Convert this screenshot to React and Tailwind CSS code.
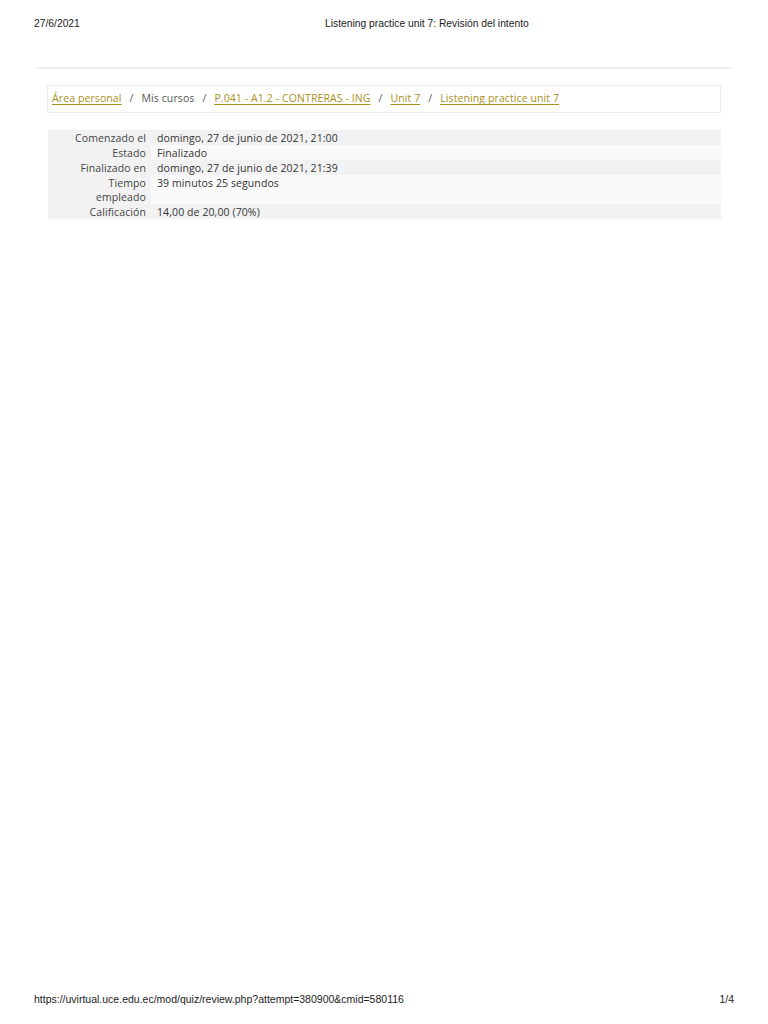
import React from 'react';

const rows = [
  { label: 'Comenzado el', value: 'domingo, 27 de junio de 2021, 21:00', bg: 'bg-[#f2f2f2]' },
  { label: 'Estado', value: 'Finalizado', bg: 'bg-[#f9f9f9]' },
  { label: 'Finalizado en', value: 'domingo, 27 de junio de 2021, 21:39', bg: 'bg-[#f2f2f2]' },
  { label: 'Tiempo empleado', value: '39 minutos 25 segundos', bg: 'bg-[#f9f9f9]' },
  { label: 'Calificación', value: '14,00 de 20,00 (70%)', bg: 'bg-[#f2f2f2]' },
];

const Crumb = ({ children }) => (
  <a href="#" className="text-[#a8911a] underline underline-offset-2">{children}</a>
);

const Sep = () => <span className="text-[#555] px-[8px]">/</span>;

const App = () => {
  return (
    <div className="relative w-[768px] h-[1024px] bg-white overflow-hidden">
      {/* print header */}
      <div className="flex items-center h-[24px] pt-[24px] px-[34px] text-[10.3px] text-[#222] font-['Liberation_Sans',Arial,sans-serif]">
        <span className="w-[291px]">27/6/2021</span>
        <span>Listening practice unit 7: Revisión del intento</span>
      </div>

      <div className="pt-[43px] font-['Open_Sans',sans-serif] text-[10.5px] tracking-[0.1px]">
        <div className="mx-[37px] h-[2px] bg-[#ededed] w-[694px]"></div>

        {/* breadcrumb */}
        <div className="mt-[16px] ml-[47px] w-[674px] h-[28px] border border-[#ececec] flex items-center pl-[4px] text-[#555]">
          <Crumb>Área personal</Crumb>
          <Sep />
          <span>Mis cursos</span>
          <Sep />
          <Crumb>P.041 - A1.2 - CONTRERAS - ING</Crumb>
          <Sep />
          <Crumb>Unit 7</Crumb>
          <Sep />
          <Crumb>Listening practice unit 7</Crumb>
        </div>

        {/* attempt summary */}
        <div className="mt-[17px] ml-[48px] w-[673px] text-[#333]">
          {rows.map((r) => (
            <div key={r.label} className="flex">
              <div className="w-[103px] bg-[#f2f2f2] text-right pr-[5px] py-[0.5px] leading-[14px] text-[#444]">
                {r.label === 'Tiempo empleado' ? (
                  <>
                    Tiempo<br />empleado
                  </>
                ) : (
                  r.label
                )}
              </div>
              <div className={`flex-1 ${r.bg} pl-[6px] py-[0.5px] leading-[14px]`}>{r.value}</div>
            </div>
          ))}
        </div>
      </div>

      {/* print footer */}
      <div className="absolute left-0 right-0 top-[992px] flex justify-between px-[34px] text-[10.5px] text-[#222] font-['Liberation_Sans',Arial,sans-serif]">
        <span>https://uvirtual.uce.edu.ec/mod/quiz/review.php?attempt=380900&amp;cmid=580116</span>
        <span>1/4</span>
      </div>
    </div>
  );
};

export default App;
